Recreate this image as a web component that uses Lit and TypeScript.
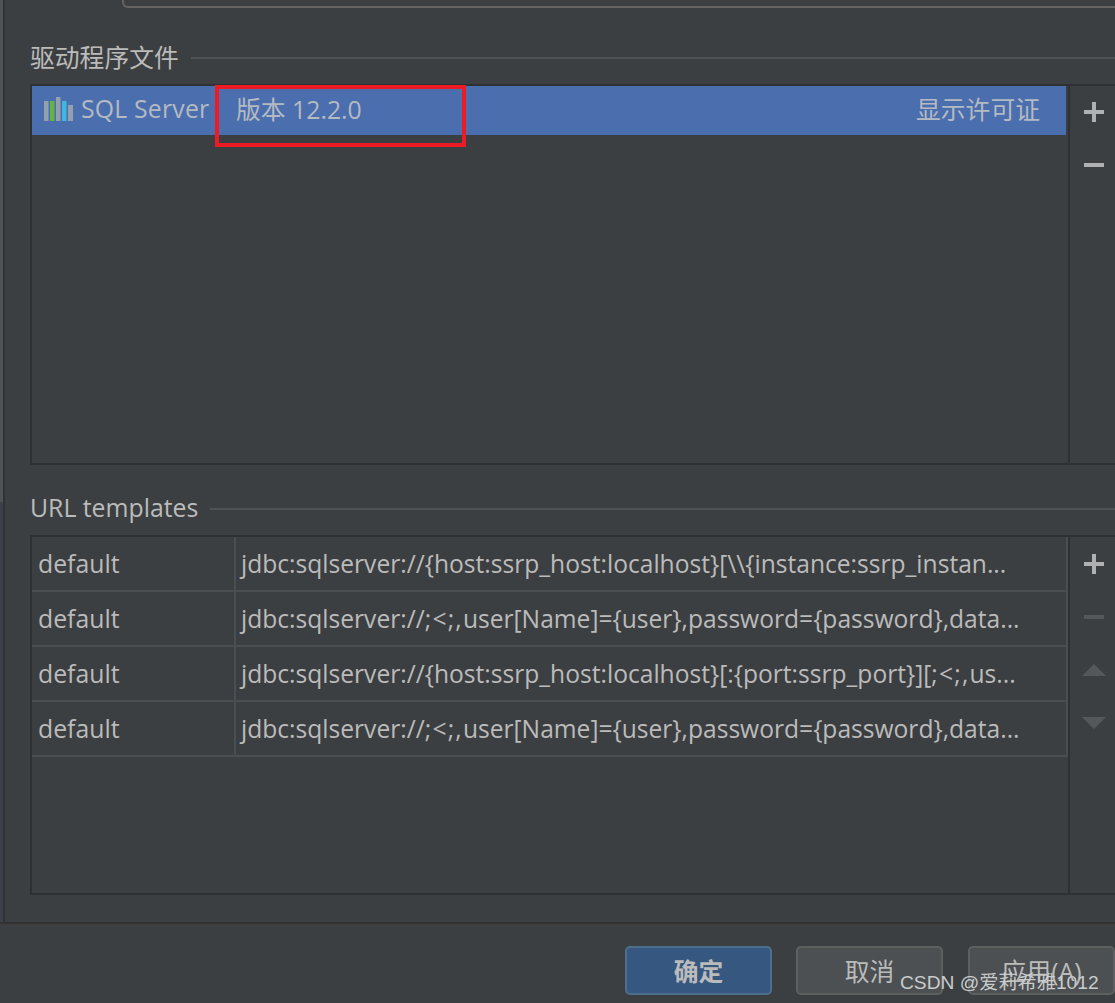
import { LitElement, html, css } from "lit";
import { customElement } from "lit/decorators.js";

const rows = [
  "jdbc:sqlserver://{host:ssrp_host:localhost}[\\\\{instance:ssrp_instan...",
  "jdbc:sqlserver://;<;,user[Name]={user},password={password},data...",
  "jdbc:sqlserver://{host:ssrp_host:localhost}[:{port:ssrp_port}][;<;,us...",
  "jdbc:sqlserver://;<;,user[Name]={user},password={password},data...",
];
const SEP = ";<;,";

@customElement("app-root")
export class AppRoot extends LitElement {
  static styles = css`
    :host {
      display: block;
      width: 1115px;
      height: 1003px;
      font-family: "Open Sans", "Noto Sans CJK SC", sans-serif;
      font-size: 24.8px;
      color: #bbbbbb;
    }
    .page {
      position: relative;
      width: 1115px;
      height: 1003px;
      background: #3c3f41;
      overflow: hidden;
      display: flex;
      flex-direction: column;
      box-sizing: border-box;
    }
    .main {
      height: 924px;
      flex: none;
      box-sizing: border-box;
      border-bottom: 2px solid #323232;
      display: flex;
    }
    .rail {
      width: 3px;
      flex: none;
      background: #3b4149;
      display: flex;
    }
    .rail i {
      display: block;
      width: 3px;
      height: 502px;
      background: #4f5256;
    }
    .body {
      flex: 1;
      min-width: 0;
      border-left: 2px solid #323232;
      padding-left: 25px;
      display: flex;
      flex-direction: column;
    }
    .stub {
      height: 8px;
      box-sizing: border-box;
      margin-left: 92px;
      border: 2px solid #646464;
      border-top: 0;
      border-right: 0;
      border-bottom-left-radius: 6px;
    }
    .title {
      display: flex;
      align-items: center;
      gap: 12px;
      height: 32px;
      line-height: 32px;
    }
    .title.first { margin-top: 33px; margin-bottom: 11px; }
    .title.second { margin-top: 27px; margin-bottom: 11px; }
    .title.second span { padding-bottom: 2px; }
    .title i {
      flex: 1;
      height: 2px;
      background: #4e5254;
      margin-top: 2px;
    }
    .box {
      border: 2px solid #2f3031;
      border-right: 0;
      display: flex;
      box-sizing: border-box;
    }
    .box.drivers { height: 381px; }
    .box.urls { height: 360px; }
    .content { width: 1036px; flex: none; }
    .tools {
      flex: 1;
      border-left: 2px solid #2f3031;
      display: flex;
      flex-direction: column;
      align-items: center;
      padding-left: 3px;
      gap: 23px;
    }
    .drivers .tools { padding-top: 11px; }
    .urls .tools { padding-top: 12px; }
    .tool { width: 24px; height: 30px; display: block; }
    .driver {
      height: 49px;
      width: 1034px;
      box-sizing: border-box;
      background: #4b6eaf;
      display: flex;
      align-items: center;
      white-space: nowrap;
      color: #b4bac2;
      padding: 0 26px 4px 12px;
    }
    .driver svg { flex: none; margin-right: 7px; }
    .driver span { padding-bottom: 2px; }
    .driver .name { width: 155px; flex: none; letter-spacing: 0.2px; }
    .driver .ver { flex: 1; }
    .row {
      display: flex;
      height: 55px;
      box-sizing: border-box;
      border-bottom: 2px solid #4b4e50;
      border-right: 2px solid #4b4e50;
      line-height: 52px;
      white-space: nowrap;
    }
    .row .k {
      width: 204px;
      flex: none;
      box-sizing: border-box;
      padding-left: 6px;
      border-right: 2px solid #4b4e50;
    }
    .row .v { padding: 1px 0 0 5px; font-size: 24.6px; }
    .row .sep { letter-spacing: 1.2px; }
    .mark {
      position: absolute;
      left: 215px;
      top: 85px;
      width: 251px;
      height: 62px;
      box-sizing: border-box;
      border: 4px solid #ed1c24;
    }
    .footer {
      flex: 1;
      display: flex;
      justify-content: flex-end;
      gap: 24px;
      padding-top: 22px;
    }
    .btn {
      width: 147px;
      height: 49px;
      box-sizing: border-box;
      border: 2px solid #5e6060;
      border-radius: 5px;
      background: #4c5052;
      text-align: center;
      line-height: 47px;
    }
    .btn.primary {
      background: #365880;
      border-color: #4c708c;
      font-weight: 700;
    }
    .btn.last { margin-left: 1px; }
    .watermark {
      position: absolute;
      left: 900px;
      top: 970px;
      font-family: "Liberation Sans", "Noto Sans CJK SC", sans-serif;
      font-size: 19.2px;
      line-height: 26px;
      color: #c9cbcc;
      white-space: nowrap;
    }
  `;

  private plus(color: string) {
    return html`<svg class="tool" viewBox="0 0 24 30"><path d="M2 15H22M12 5V25" stroke=${color} stroke-width="4" fill="none"/></svg>`;
  }
  private minus(color: string) {
    return html`<svg class="tool" viewBox="0 0 24 30"><path d="M2 15H22" stroke=${color} stroke-width="4" fill="none"/></svg>`;
  }
  private url(r: string) {
    const i = r.indexOf(SEP);
    if (i < 0) return r;
    return html`${r.slice(0, i)}<span class="sep">${SEP}</span>${r.slice(i + SEP.length)}`;
  }

  render() {
    return html`<div class="page">
      <div class="main">
        <div class="rail"><i></i></div>
        <div class="body">
          <div class="stub"></div>
          <div class="title first"><span>驱动程序文件</span><i></i></div>
          <div class="box drivers">
            <div class="content">
              <div class="driver">
                <svg width="30" height="24" viewBox="0 0 30 24">
                  <rect x="0" y="4" width="4.5" height="20" fill="#93a0ad"/>
                  <rect x="6" y="4" width="4.5" height="20" fill="#62b543"/>
                  <rect x="12" y="0" width="4.5" height="24" fill="#93a0ad"/>
                  <rect x="18" y="4" width="4.5" height="20" fill="#40b6e0"/>
                  <rect x="24" y="8" width="5" height="16" fill="#93a0ad"/>
                </svg>
                <span class="name">SQL Server</span>
                <span class="ver">版本 12.2.0</span>
                <span>显示许可证</span>
              </div>
            </div>
            <div class="tools">${this.plus("#afb1b3")}${this.minus("#afb1b3")}</div>
          </div>
          <div class="title second"><span>URL templates</span><i></i></div>
          <div class="box urls">
            <div class="content">
              ${rows.map((r) => html`<div class="row"><div class="k">default</div><div class="v">${this.url(r)}</div></div>`)}
            </div>
            <div class="tools">
              ${this.plus("#afb1b3")}${this.minus("#55585a")}
              <svg class="tool" viewBox="0 0 24 30"><path d="M0 21L12 9L24 21Z" fill="#55585a"/></svg>
              <svg class="tool" viewBox="0 0 24 30"><path d="M0 9L24 9L12 21Z" fill="#55585a"/></svg>
            </div>
          </div>
        </div>
      </div>
      <div class="footer">
        <div class="btn primary">确定</div>
        <div class="btn">取消</div>
        <div class="btn last">应用(A)</div>
      </div>
      <div class="mark"></div>
      <div class="watermark">CSDN @爱莉希雅1012</div>
    </div>`;
  }
}
